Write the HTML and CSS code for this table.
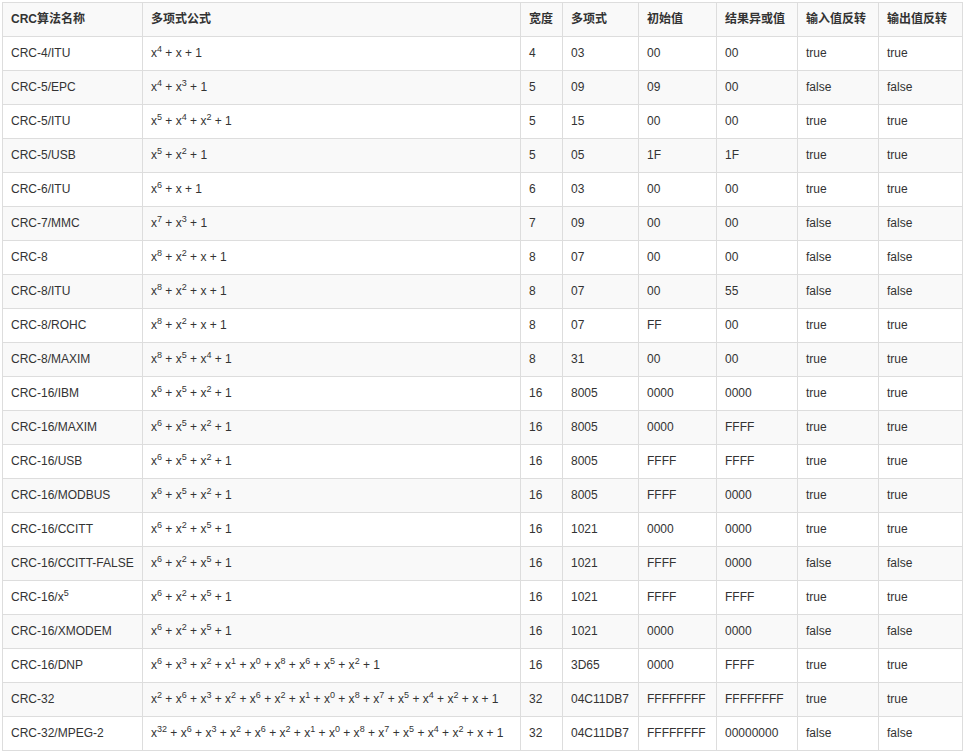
FILE: index.html
```html
<!DOCTYPE html>
<html lang="zh">
<head>
<meta charset="utf-8">
<title>CRC</title>
<link rel="stylesheet" href="styles.css">
</head>
<body>
<table class="crc-table">
<colgroup>
<col class="c-name"><col class="c-formula"><col class="c-width"><col class="c-poly"><col class="c-init"><col class="c-xor"><col class="c-refin"><col class="c-refout">
</colgroup>
<thead>
<tr><th>CRC算法名称</th><th>多项式公式</th><th>宽度</th><th>多项式</th><th>初始值</th><th>结果异或值</th><th>输入值反转</th><th>输出值反转</th></tr>
</thead>
<tbody>
<tr><td>CRC-4/ITU</td><td>x<sup>4</sup> + x + 1</td><td>4</td><td>03</td><td>00</td><td>00</td><td>true</td><td>true</td></tr>
<tr><td>CRC-5/EPC</td><td>x<sup>4</sup> + x<sup>3</sup> + 1</td><td>5</td><td>09</td><td>09</td><td>00</td><td>false</td><td>false</td></tr>
<tr><td>CRC-5/ITU</td><td>x<sup>5</sup> + x<sup>4</sup> + x<sup>2</sup> + 1</td><td>5</td><td>15</td><td>00</td><td>00</td><td>true</td><td>true</td></tr>
<tr><td>CRC-5/USB</td><td>x<sup>5</sup> + x<sup>2</sup> + 1</td><td>5</td><td>05</td><td>1F</td><td>1F</td><td>true</td><td>true</td></tr>
<tr><td>CRC-6/ITU</td><td>x<sup>6</sup> + x + 1</td><td>6</td><td>03</td><td>00</td><td>00</td><td>true</td><td>true</td></tr>
<tr><td>CRC-7/MMC</td><td>x<sup>7</sup> + x<sup>3</sup> + 1</td><td>7</td><td>09</td><td>00</td><td>00</td><td>false</td><td>false</td></tr>
<tr><td>CRC-8</td><td>x<sup>8</sup> + x<sup>2</sup> + x + 1</td><td>8</td><td>07</td><td>00</td><td>00</td><td>false</td><td>false</td></tr>
<tr><td>CRC-8/ITU</td><td>x<sup>8</sup> + x<sup>2</sup> + x + 1</td><td>8</td><td>07</td><td>00</td><td>55</td><td>false</td><td>false</td></tr>
<tr><td>CRC-8/ROHC</td><td>x<sup>8</sup> + x<sup>2</sup> + x + 1</td><td>8</td><td>07</td><td>FF</td><td>00</td><td>true</td><td>true</td></tr>
<tr><td>CRC-8/MAXIM</td><td>x<sup>8</sup> + x<sup>5</sup> + x<sup>4</sup> + 1</td><td>8</td><td>31</td><td>00</td><td>00</td><td>true</td><td>true</td></tr>
<tr><td>CRC-16/IBM</td><td>x<sup>6</sup> + x<sup>5</sup> + x<sup>2</sup> + 1</td><td>16</td><td>8005</td><td>0000</td><td>0000</td><td>true</td><td>true</td></tr>
<tr><td>CRC-16/MAXIM</td><td>x<sup>6</sup> + x<sup>5</sup> + x<sup>2</sup> + 1</td><td>16</td><td>8005</td><td>0000</td><td>FFFF</td><td>true</td><td>true</td></tr>
<tr><td>CRC-16/USB</td><td>x<sup>6</sup> + x<sup>5</sup> + x<sup>2</sup> + 1</td><td>16</td><td>8005</td><td>FFFF</td><td>FFFF</td><td>true</td><td>true</td></tr>
<tr><td>CRC-16/MODBUS</td><td>x<sup>6</sup> + x<sup>5</sup> + x<sup>2</sup> + 1</td><td>16</td><td>8005</td><td>FFFF</td><td>0000</td><td>true</td><td>true</td></tr>
<tr><td>CRC-16/CCITT</td><td>x<sup>6</sup> + x<sup>2</sup> + x<sup>5</sup> + 1</td><td>16</td><td>1021</td><td>0000</td><td>0000</td><td>true</td><td>true</td></tr>
<tr><td>CRC-16/CCITT-FALSE</td><td>x<sup>6</sup> + x<sup>2</sup> + x<sup>5</sup> + 1</td><td>16</td><td>1021</td><td>FFFF</td><td>0000</td><td>false</td><td>false</td></tr>
<tr><td>CRC-16/x<sup>5</sup></td><td>x<sup>6</sup> + x<sup>2</sup> + x<sup>5</sup> + 1</td><td>16</td><td>1021</td><td>FFFF</td><td>FFFF</td><td>true</td><td>true</td></tr>
<tr><td>CRC-16/XMODEM</td><td>x<sup>6</sup> + x<sup>2</sup> + x<sup>5</sup> + 1</td><td>16</td><td>1021</td><td>0000</td><td>0000</td><td>false</td><td>false</td></tr>
<tr><td>CRC-16/DNP</td><td>x<sup>6</sup> + x<sup>3</sup> + x<sup>2</sup> + x<sup>1</sup> + x<sup>0</sup> + x<sup>8</sup> + x<sup>6</sup> + x<sup>5</sup> + x<sup>2</sup> + 1</td><td>16</td><td>3D65</td><td>0000</td><td>FFFF</td><td>true</td><td>true</td></tr>
<tr><td>CRC-32</td><td>x<sup>2</sup> + x<sup>6</sup> + x<sup>3</sup> + x<sup>2</sup> + x<sup>6</sup> + x<sup>2</sup> + x<sup>1</sup> + x<sup>0</sup> + x<sup>8</sup> + x<sup>7</sup> + x<sup>5</sup> + x<sup>4</sup> + x<sup>2</sup> + x + 1</td><td>32</td><td>04C11DB7</td><td>FFFFFFFF</td><td>FFFFFFFF</td><td>true</td><td>true</td></tr>
<tr><td>CRC-32/MPEG-2</td><td>x<sup>32</sup> + x<sup>6</sup> + x<sup>3</sup> + x<sup>2</sup> + x<sup>6</sup> + x<sup>2</sup> + x<sup>1</sup> + x<sup>0</sup> + x<sup>8</sup> + x<sup>7</sup> + x<sup>5</sup> + x<sup>4</sup> + x<sup>2</sup> + x + 1</td><td>32</td><td>04C11DB7</td><td>FFFFFFFF</td><td>00000000</td><td>false</td><td>false</td></tr>
</tbody>
</table>
</body>
</html>
```
FILE: styles.css
```css
html, body {
  margin: 0;
  padding: 0;
  background: #ffffff;
}
body {
  padding: 2px;
  font-family: "Liberation Sans", Arial, "Noto Sans CJK SC", sans-serif;
  font-size: 12px;
  line-height: 17px;
  color: #333333;
}
.crc-table {
  width: 961px;
  border-collapse: collapse;
  table-layout: fixed;
  border: 1px solid #dddddd;
}
.c-name { width: 140px; }
.c-formula { width: 378px; }
.c-width { width: 42px; }
.c-poly { width: 76px; }
.c-init { width: 78px; }
.c-xor { width: 81px; }
.c-refin { width: 81px; }
.c-refout { width: 84px; }
.crc-table th,
.crc-table td {
  border: 1px solid #dddddd;
  padding: 8px 8px;
  text-align: left;
  vertical-align: middle;
  white-space: nowrap;
  overflow: hidden;
}
.crc-table th {
  font-weight: bold;
  background: #f9f9f9;
}
.crc-table tbody tr:nth-child(even) td {
  background: #f9f9f9;
}
.crc-table sup {
  font-size: 9px;
  line-height: 0;
  vertical-align: 5px;
}
```
